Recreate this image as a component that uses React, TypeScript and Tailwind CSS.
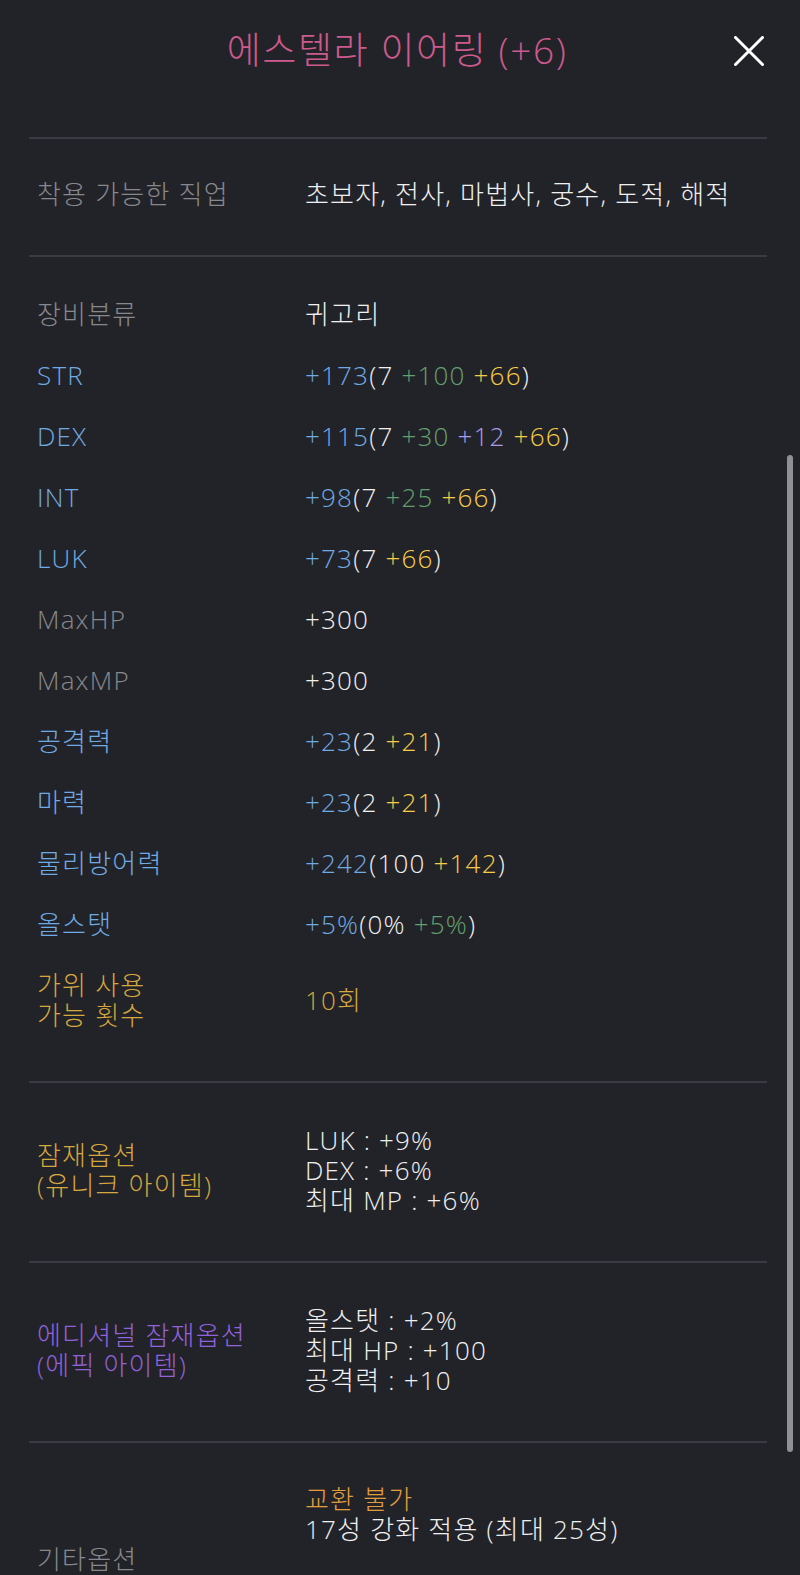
import React from 'react';

type Seg = { t: string; c: string };

const B = 'text-[#70aae3]';
const W = 'text-[#f0f0f1]';
const G = 'text-[#62a06e]';
const Y = 'text-[#f7cd48]';
const P = 'text-[#aa9eec]';

const STAT_ROWS: { label: string; labelColor: string; value: Seg[] }[] = [
  { label: '장비분류', labelColor: 'text-[#87888e]', value: [{ t: '귀고리', c: W }] },
  {
    label: 'STR',
    labelColor: B,
    value: [
      { t: '+173', c: B },
      { t: '(7 ', c: W },
      { t: '+100 ', c: G },
      { t: '+66', c: Y },
      { t: ')', c: W },
    ],
  },
  {
    label: 'DEX',
    labelColor: B,
    value: [
      { t: '+115', c: B },
      { t: '(7 ', c: W },
      { t: '+30 ', c: G },
      { t: '+12 ', c: P },
      { t: '+66', c: Y },
      { t: ')', c: W },
    ],
  },
  {
    label: 'INT',
    labelColor: B,
    value: [
      { t: '+98', c: B },
      { t: '(7 ', c: W },
      { t: '+25 ', c: G },
      { t: '+66', c: Y },
      { t: ')', c: W },
    ],
  },
  {
    label: 'LUK',
    labelColor: B,
    value: [
      { t: '+73', c: B },
      { t: '(7 ', c: W },
      { t: '+66', c: Y },
      { t: ')', c: W },
    ],
  },
  { label: 'MaxHP', labelColor: 'text-[#87888e]', value: [{ t: '+300', c: W }] },
  { label: 'MaxMP', labelColor: 'text-[#87888e]', value: [{ t: '+300', c: W }] },
  {
    label: '공격력',
    labelColor: B,
    value: [
      { t: '+23', c: B },
      { t: '(2 ', c: W },
      { t: '+21', c: Y },
      { t: ')', c: W },
    ],
  },
  {
    label: '마력',
    labelColor: B,
    value: [
      { t: '+23', c: B },
      { t: '(2 ', c: W },
      { t: '+21', c: Y },
      { t: ')', c: W },
    ],
  },
  {
    label: '물리방어력',
    labelColor: B,
    value: [
      { t: '+242', c: B },
      { t: '(100 ', c: W },
      { t: '+142', c: Y },
      { t: ')', c: W },
    ],
  },
  {
    label: '올스탯',
    labelColor: B,
    value: [
      { t: '+5%', c: B },
      { t: '(0% ', c: W },
      { t: '+5%', c: G },
      { t: ')', c: W },
    ],
  },
];

function Row({
  label,
  labelColor,
  children,
}: {
  label: React.ReactNode;
  labelColor: string;
  children: React.ReactNode;
}) {
  return (
    <div className="flex items-center py-[15.5px] leading-[30px]">
      <div className={`w-[268px] shrink-0 ${labelColor}`}>{label}</div>
      <div className="flex-1">{children}</div>
    </div>
  );
}

export default function App() {
  return (
    <div
      className="relative h-[1575px] overflow-hidden bg-[#222328] text-[26px] font-light tracking-[1.2px] text-[#f0f0f1]"
      style={{ fontFamily: '"Open Sans", "Noto Sans CJK KR", sans-serif' }}
    >
      {/* 헤더 */}
      <header className="relative h-[137px] pt-[26px] pr-[6px] text-center">
        <h1 className="text-[37px] leading-[48px] font-light tracking-[1.6px] text-[#cd5a8c]">
          에스텔라 이어링 (+6)
        </h1>
        <button className="absolute right-[36px] top-[36px] h-[30px] w-[30px]">
          <svg viewBox="0 0 30 30" className="h-[30px] w-[30px]">
            <path d="M1.5 1.5 L28.5 28.5 M28.5 1.5 L1.5 28.5" stroke="#ffffff" strokeWidth="3" strokeLinecap="round" />
          </svg>
        </button>
      </header>

      <div className="ml-[29px] mr-[33px]">
        <section className="border-t-2 border-[#393a43] pl-[8px] pt-[24px] pb-[31px]">
          <Row label="착용 가능한 직업" labelColor="text-[#87888e]">
            초보자, 전사, 마법사, 궁수, 도적, 해적
          </Row>
        </section>

        <section className="border-t-2 border-[#393a43] pl-[8px] pt-[26px] pb-[36px]">
          {STAT_ROWS.map((row) => (
            <Row key={row.label} label={row.label} labelColor={row.labelColor}>
              {row.value.map((s, i) => (
                <span key={i} className={s.c}>
                  {s.t}
                </span>
              ))}
            </Row>
          ))}
          <Row
            label={
              <>
                가위 사용
                <br />
                가능 횟수
              </>
            }
            labelColor="text-[#d6a73e]"
          >
            <span className="text-[#d6a73e]">10회</span>
          </Row>
        </section>

        <section className="border-t-2 border-[#393a43] pl-[8px] pt-[26px] pb-[31px]">
          <Row
            label={
              <>
                잠재옵션
                <br />
                (유니크 아이템)
              </>
            }
            labelColor="text-[#d6a73e]"
          >
            LUK : +9%
            <br />
            DEX : +6%
            <br />
            최대 MP : +6%
          </Row>
        </section>

        <section className="border-t-2 border-[#393a43] pl-[8px] pt-[26px] pb-[31px]">
          <Row
            label={
              <>
                에디셔널 잠재옵션
                <br />
                (에픽 아이템)
              </>
            }
            labelColor="text-[#9162dc]"
          >
            올스탯 : +2%
            <br />
            최대 HP : +100
            <br />
            공격력 : +10
          </Row>
        </section>

        <section className="border-t-2 border-[#393a43] pl-[8px] pt-[25px] pb-[31px]">
          <Row label="기타옵션" labelColor="text-[#87888e]">
            <div className="text-[#e39d3e]">교환 불가</div>
            <div>17성 강화 적용 (최대 25성)</div>
            <div className="h-[90px]" />
          </Row>
        </section>
      </div>

      {/* 스크롤바 */}
      <div className="absolute right-[7px] top-[455px] h-[997px] w-[6px] rounded-full bg-[#8e9097]" />
    </div>
  );
}
